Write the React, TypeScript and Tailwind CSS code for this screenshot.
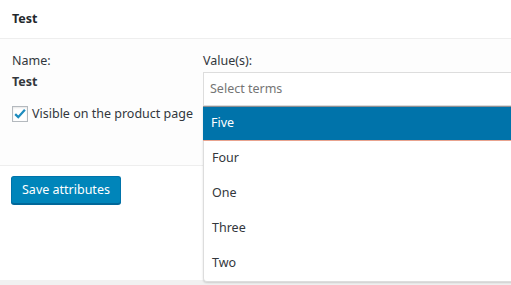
import React from "react";

const terms = ["Five", "Four", "One", "Three", "Two"];

const App: React.FC = () => {
  return (
    <div
      className="relative w-[511px] h-[285px] overflow-hidden bg-[#f1f1f1] text-[12.5px] text-[#32373c]"
      style={{ fontFamily: '"Noto Sans", "Open Sans", sans-serif' }}
    >
      <div className="bg-white">
        {/* Attribute header */}
        <div className="h-[39px] flex items-center px-3 border-b border-[#eee]">
          <strong className="text-[#23282d]">Test</strong>
        </div>

        {/* Attribute body */}
        <div className="h-[127px] bg-[#fdfdfd] border-b border-[#eee] flex pt-[13px]">
          <div className="w-[203px] pl-3">
            <div className="leading-[18px]">Name:</div>
            <div className="leading-[18px] mt-[3px] font-bold">Test</div>
            <label className="flex items-center gap-[4px] mt-[14px]">
              <span className="w-4 h-4 border border-[#b4b9be] bg-white flex items-center justify-center shadow-[inset_0_1px_2px_rgba(0,0,0,0.1)]">
                <svg viewBox="0 0 16 16" className="w-[14px] h-[14px]">
                  <path
                    d="M2.5 8.2 L6 11.6 L13.6 3.2"
                    fill="none"
                    stroke="#1e8cbe"
                    strokeWidth="2.6"
                  />
                </svg>
              </span>
              <span className="leading-[18px]">Visible on the product page</span>
            </label>
          </div>
          <div className="flex-1">
            <div className="leading-[18px]">Value(s):</div>
            <div className="relative mt-[2px]">
              <div className="h-[34px] border border-[#ddd] border-r-0 bg-white flex items-center pl-[6px] pt-[1px] text-[#757575]">
                Select terms
              </div>
              {/* Dropdown list */}
              <div className="absolute left-0 top-[34px] w-[320px] bg-white border border-[#ddd] border-t-0 rounded-b-[4px] shadow-[0_1px_2px_rgba(0,0,0,0.15)] z-10">
                {terms.map((t, i) => (
                  <div
                    key={t}
                    className={
                      i === 0
                        ? "h-[35px] flex items-center pl-[8px] bg-[#0073aa] text-white border-t border-[#8c8f94] border-b border-b-[#e8a38f] -mx-px"
                        : "h-[35px] flex items-center pl-[8px] text-[#32373c]"
                    }
                  >
                    {t}
                  </div>
                ))}
              </div>
            </div>
          </div>
        </div>

        {/* Toolbar */}
        <div className="h-[114px] pl-[11px] pt-[10px]">
          <button className="h-[28px] px-[10px] rounded-[3px] bg-[#0085ba] border border-[#0073aa] border-b-[#006799] text-white text-[12.5px] shadow-[0_1px_0_#006799]">
            Save attributes
          </button>
        </div>
      </div>
    </div>
  );
};

export default App;
